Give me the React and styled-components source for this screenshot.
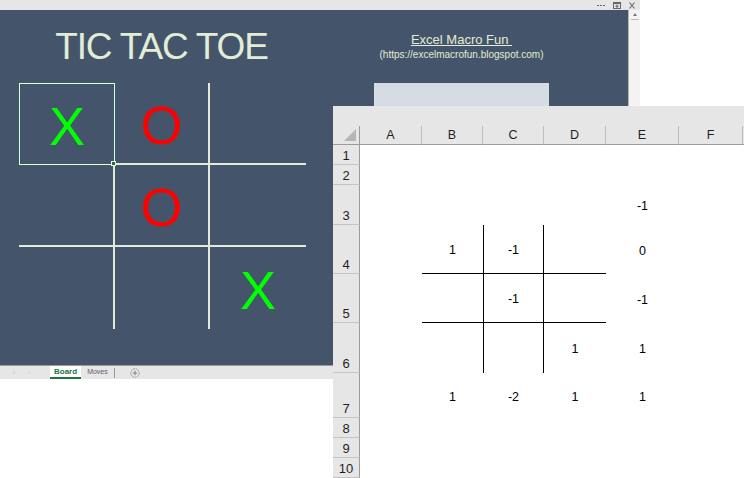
import React from 'react'
import styled, { createGlobalStyle } from 'styled-components'

const GlobalStyle = createGlobalStyle`
  html, body {
    margin: 0;
    padding: 0;
    background: #fff;
  }
  body {
    font-family: 'Liberation Sans', Arial, sans-serif;
  }
`

const Desktop = styled.div`
  position: relative;
  width: 744px;
  height: 478px;
  overflow: hidden;
  background: #fff;
`

/* ---------- back window: the board sheet ---------- */

const BackWindow = styled.div`
  position: absolute;
  left: 0;
  top: 0;
  width: 640px;
  height: 379px;
  display: flex;
  flex-direction: column;
`

const TitleBar = styled.div`
  height: 10px;
  background: #e6e6e6;
  display: flex;
  justify-content: flex-end;
  align-items: center;
  gap: 8px;
  padding-right: 5px;
`

const Body = styled.div`
  flex: 1;
  display: flex;
`

const BoardSheet = styled.div`
  flex: 1;
  background: #44546a;
  display: flex;
  padding-left: 19px;
`

const LeftCol = styled.div`
  width: 287px;
  display: flex;
  flex-direction: column;
`

const Title = styled.h1`
  margin: 18px 0 0;
  padding-right: 2px;
  font: 400 37px/37px 'Liberation Sans', Arial, sans-serif;
  letter-spacing: -1.2px;
  color: #e2ecd6;
  text-align: center;
`

const Board = styled.div`
  margin-top: 18px;
  display: grid;
  grid-template-columns: 96px 95px 96px;
  grid-template-rows: repeat(3, 82px);
`

const Square = styled.div`
  position: relative;
  box-sizing: border-box;
  display: flex;
  align-items: center;
  justify-content: center;
  padding-top: 3px;
  font: 400 54px/1 'Liberation Sans', Arial, sans-serif;
  color: ${(p) => (p.$mark === 'X' ? '#00ff00' : '#ff0000')};
  border-right: ${(p) => (p.$right ? '2px solid #e2ebd6' : '0')};
  border-bottom: ${(p) => (p.$bottom ? '2px solid #e2ebd6' : '0')};
  ${(p) =>
    p.$selected &&
    `
    border: 1px solid #e8f6e8;
    outline: 1px solid rgba(33, 115, 70, 0.55);
  `}
`

const FillHandle = styled.span`
  position: absolute;
  right: -2px;
  bottom: -2px;
  width: 3px;
  height: 3px;
  background: #217346;
  border: 1px solid #e8f6e8;
`

const RightCol = styled.div`
  margin-left: 68px;
  width: 175px;
  display: flex;
  flex-direction: column;
  align-items: center;
  padding-top: 22px;
`

const SiteLink = styled.a`
  font: 400 13px/15px 'Liberation Sans', Arial, sans-serif;
  color: #e2ecd6;
  text-decoration: underline;
  white-space: pre;
`

const SiteUrl = styled.div`
  margin-top: 2px;
  font: 400 10px/12px 'Liberation Sans', Arial, sans-serif;
  color: #e2ecd6;
`

const ButtonShape = styled.div`
  margin-top: 22px;
  width: 175px;
  height: 60px;
  background: #d6dce4;
`

const ScrollBar = styled.div`
  width: 11px;
  border-left: 1px solid #b5b5b5;
  background: #f3f3f3;
  display: flex;
  flex-direction: column;
  align-items: center;
  padding-top: 3px;
`

const ScrollArrow = styled.div`
  width: 0;
  height: 0;
  border-left: 2px solid transparent;
  border-right: 2px solid transparent;
  border-bottom: 3px solid #777;
`

const ScrollLine = styled.div`
  margin-top: 3px;
  width: 8px;
  height: 1px;
  background: #bbb;
`

const TabBar = styled.div`
  border-top: 1px solid #9a9a9a;
  height: 13px;
  background: #e6e6e6;
  display: flex;
  align-items: stretch;
`

const NavArrows = styled.div`
  width: 50px;
  display: flex;
  align-items: center;
  gap: 13px;
  padding-left: 13px;
  box-sizing: border-box;
  color: #c4c4c4;
  font: 400 7px/1 'Liberation Sans', Arial, sans-serif;
`

const Tab = styled.div`
  box-sizing: border-box;
  padding: 0 ${(p) => (p.$active ? '4px' : '6px')};
  display: flex;
  align-items: center;
  background: ${(p) => (p.$active ? '#fff' : 'transparent')};
  border-bottom: 2px solid ${(p) => (p.$active ? '#217346' : 'transparent')};
  color: ${(p) => (p.$active ? '#217346' : '#6a5570')};
  font: ${(p) => (p.$active ? 700 : 400)} ${(p) => (p.$active ? '8px' : '7px')} / 1
    'Liberation Sans', Arial, sans-serif;
`

const TabDivider = styled.div`
  width: 1px;
  margin: 2px 0 1px;
  background: #9a9a9a;
`

const AddSheet = styled.div`
  margin-left: 15px;
  display: flex;
  align-items: center;
`

/* ---------- front window: the numbers sheet ---------- */

const FrontWindow = styled.div`
  position: absolute;
  left: 333px;
  top: 106px;
  width: 411px;
  height: 372px;
  background: #e6e6e6;
  display: flex;
  flex-direction: column;
  overflow: hidden;
`

const FormulaStrip = styled.div`
  height: 20px;
  flex: none;
`

const Grid = styled.div`
  display: grid;
  grid-template-columns: 27px 62px 61px 61px 62px 73px 64px 40px;
  grid-template-rows: 19px 20px 20px 40px 49px 49px 50px 45px 20px 20px 20px;
  background: #fff;
`

const Corner = styled.div`
  box-sizing: border-box;
  background: #e6e6e6;
  border-right: 1px solid #9b9b9b;
  border-bottom: 1px solid #9b9b9b;
  position: relative;
  &::after {
    content: '';
    position: absolute;
    right: 3px;
    bottom: 3px;
    width: 0;
    height: 0;
    border-left: 12px solid transparent;
    border-bottom: 12px solid #b6b6b6;
  }
`

const ColHead = styled.div`
  box-sizing: border-box;
  background: #e6e6e6;
  border-bottom: 1px solid #9b9b9b;
  border-right: 1px solid #bdbdbd;
  display: flex;
  align-items: center;
  justify-content: center;
  padding-top: 1px;
  font: 400 12.5px/1 'Liberation Sans', Arial, sans-serif;
  color: #1e1e1e;
`

const RowHead = styled.div`
  box-sizing: border-box;
  background: #e6e6e6;
  border-right: 1px solid #9b9b9b;
  border-bottom: 1px solid #c4c4c4;
  display: flex;
  align-items: flex-end;
  justify-content: center;
  padding-bottom: 2px;
  font: 400 13px/1 'Liberation Sans', Arial, sans-serif;
  color: #1e1e1e;
`

const Cell = styled.div`
  box-sizing: border-box;
  display: flex;
  align-items: center;
  justify-content: center;
  padding-top: 3px;
  font: 400 12.5px/1 'Liberation Sans', Arial, sans-serif;
  color: #000;
  border-left: ${(p) => (p.$left ? '1px solid #000' : '0')};
  border-right: ${(p) => (p.$right ? '1px solid #000' : '0')};
  border-bottom: ${(p) => (p.$bottom ? '1px solid #000' : '0')};
`

const boardMarks = [
  ['X', 'O', ''],
  ['', 'O', ''],
  ['', '', 'X'],
]

const columns = ['A', 'B', 'C', 'D', 'E', 'F', '']
const rowCount = 10

const values = {
  E3: '-1',
  B4: '1',
  C4: '-1',
  E4: '0',
  C5: '-1',
  E5: '-1',
  D6: '1',
  E6: '1',
  B7: '1',
  C7: '-2',
  D7: '1',
  E7: '1',
}

const cellBorders = (col, row) => {
  const inGrid = row >= 4 && row <= 6
  return {
    left: inGrid && col === 'C',
    right: inGrid && col === 'C',
    bottom: (row === 4 || row === 5) && ['B', 'C', 'D'].includes(col),
  }
}

const MinimizeIcon = () => (
  <svg width='8' height='3' viewBox='0 0 8 3'>
    <path d='M0 1.5h2M3 1.5h2M6 1.5h2' stroke='#666' strokeWidth='1' />
  </svg>
)

const RestoreIcon = () => (
  <svg width='8' height='7' viewBox='0 0 8 7'>
    <rect x='0.5' y='0.5' width='7' height='6' fill='none' stroke='#666' />
    <path d='M0.5 1.5h7M4 2.5v3.5M2.3 4.2h3.4' stroke='#666' strokeWidth='1' />
  </svg>
)

const CloseIcon = () => (
  <svg width='6' height='7' viewBox='0 0 6 7'>
    <path d='M0.5 0.5L5.5 6.5M5.5 0.5L0.5 6.5' stroke='#666' strokeWidth='1.1' />
  </svg>
)

const PlusCircle = () => (
  <svg width='10' height='10' viewBox='0 0 10 10'>
    <circle cx='5' cy='5' r='4.2' fill='none' stroke='#888' strokeWidth='0.9' strokeDasharray='1.6 0.9' />
    <path d='M5 2.8v4.4M2.8 5h4.4' stroke='#777' strokeWidth='0.9' />
  </svg>
)

const App = () => {
  return (
    <Desktop>
      <GlobalStyle />

      <BackWindow>
        <TitleBar>
          <MinimizeIcon />
          <RestoreIcon />
          <CloseIcon />
        </TitleBar>
        <Body>
          <BoardSheet>
            <LeftCol>
              <Title>TIC TAC TOE</Title>
              <Board>
                {boardMarks.map((row, r) =>
                  row.map((mark, c) => {
                    const selected = r === 0 && c === 0
                    return (
                      <Square
                        key={`${r}-${c}`}
                        $mark={mark}
                        $right={c < 2}
                        $bottom={r < 2}
                        $selected={selected}
                      >
                        {mark}
                        {selected && <FillHandle />}
                      </Square>
                    )
                  }),
                )}
              </Board>
            </LeftCol>
            <RightCol>
              <SiteLink href='#'>{'Excel Macro Fun '}</SiteLink>
              <SiteUrl>(https://excelmacrofun.blogspot.com)</SiteUrl>
              <ButtonShape />
            </RightCol>
          </BoardSheet>
          <ScrollBar>
            <ScrollArrow />
            <ScrollLine />
          </ScrollBar>
        </Body>
        <TabBar>
          <NavArrows>
            <span>‹</span>
            <span>›</span>
          </NavArrows>
          <Tab $active>Board</Tab>
          <Tab>Moves</Tab>
          <TabDivider />
          <AddSheet>
            <PlusCircle />
          </AddSheet>
        </TabBar>
      </BackWindow>

      <FrontWindow>
        <FormulaStrip />
        <Grid>
          <Corner />
          {columns.map((col, i) => (
            <ColHead key={`h${i}`}>{col}</ColHead>
          ))}
          {Array.from({ length: rowCount }, (_, i) => i + 1).map((row) => (
            <React.Fragment key={`r${row}`}>
              <RowHead>{row}</RowHead>
              {columns.map((col, i) => {
                const b = cellBorders(col, row)
                return (
                  <Cell key={`c${row}${i}`} $left={b.left} $right={b.right} $bottom={b.bottom}>
                    {values[`${col}${row}`]}
                  </Cell>
                )
              })}
            </React.Fragment>
          ))}
        </Grid>
      </FrontWindow>
    </Desktop>
  )
}

export default App
